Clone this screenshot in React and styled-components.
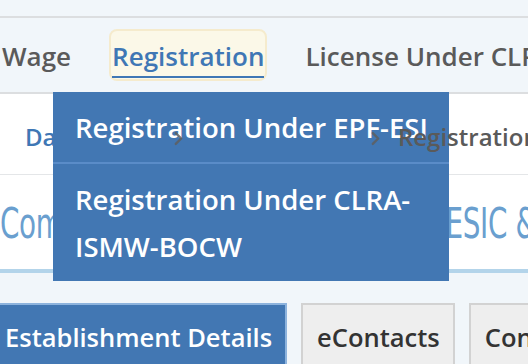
import React from "react";
import styled, { createGlobalStyle } from "styled-components";

const GlobalStyle = createGlobalStyle`
  html, body {
    margin: 0;
    padding: 0;
    background: #f1f6fa;
    font-family: "Open Sans", "Liberation Sans", sans-serif;
  }
`;

const navItems = [
  { label: "Wage" },
  { label: "Registration", active: true },
  { label: "License Under CLRA" },
];

const menuItems = ["Registration Under EPF-ESI", "Registration Under CLRA-ISMW-BOCW"];

const ChevronIcon = () => (
  <ChevronSvg viewBox="0 0 10 16">
    <path d="M2 2 L8 8 L2 14" fill="none" stroke="#5f5f5f" strokeWidth="2.6" strokeLinecap="round" strokeLinejoin="round" />
  </ChevronSvg>
);

function App() {
  return (
    <Page>
      <GlobalStyle />
      <TopStrip />
      <Nav>
        {navItems.map((item, i) => (
          <React.Fragment key={item.label}>
            {i > 0 && <NavSep />}
            <NavItem $active={item.active}>
              <NavText $active={item.active}>{item.label}</NavText>
            </NavItem>
          </React.Fragment>
        ))}
      </Nav>
      <Breadcrumb>
        <Crumb $link>Dashboard</Crumb>
        <ChevronIcon />
        <Crumb $link>Compliances</Crumb>
        <ChevronIcon />
        <Crumb>Registration</Crumb>
      </Breadcrumb>
      <TitleBar>
        <Title>Compliance Registration for EPF-ESIC &amp; Others</Title>
      </TitleBar>
      <Tabs>
        <Tab $active>Establishment Details</Tab>
        <Tab>eContacts</Tab>
        <Tab>Contractors</Tab>
      </Tabs>

      <Dropdown>
        {menuItems.map((m) => (
          <MenuItem key={m}>{m}</MenuItem>
        ))}
      </Dropdown>
    </Page>
  );
}

const Page = styled.div`
  position: relative;
  width: 528px;
  height: 364px;
  overflow: hidden;
`;

const TopStrip = styled.div`
  height: 16px;
`;

const Nav = styled.div`
  display: flex;
  align-items: center;
  gap: 20px;
  height: 74px;
  padding-left: 2px;
  border-top: 2px solid #dcdee0;
  border-bottom: 2px solid #dcdee0;
  white-space: nowrap;
`;

const NavItem = styled.div`
  display: flex;
  align-items: center;
  height: 48px;
  padding: 0 1px;
  border: 2px solid ${(p) => (p.$active ? "#f5ebcd" : "transparent")};
  border-radius: 8px;
  background: ${(p) => (p.$active ? "#fbf8e8" : "transparent")};
  margin: ${(p) => (p.$active ? "0 -2px" : "0 -3px")};
`;

const NavText = styled.span`
  font-size: 26px;
  font-weight: 600;
  line-height: 40px;
  padding-top: 4px;
  color: ${(p) => (p.$active ? "#3f77b5" : "#5a5a5a")};
  border-bottom: 2px solid ${(p) => (p.$active ? "#3f77b5" : "transparent")};
`;

const NavSep = styled.div`
  width: 2px;
  height: 30px;
  background: #c9c9c9;
`;

const Breadcrumb = styled.div`
  display: flex;
  align-items: center;
  height: 81px;
  padding: 4px 0 0 25px;
  box-sizing: border-box;
  background: #fff;
  border-bottom: 1px solid #e4e6e8;
  white-space: nowrap;
`;

/* the current crumb is painted over the open menu, like in the page */
const Crumb = styled.span`
  position: relative;
  z-index: ${(p) => (p.$link ? "auto" : 3)};
  font-size: 24px;
  font-weight: 600;
  color: ${(p) => (p.$link ? "#3f77b5" : "#5a5a5a")};
`;

const ChevronSvg = styled.svg`
  position: relative;
  z-index: 3;
  flex: none;
  width: 9px;
  height: 15px;
  margin: 4px 18px 0 22px;
  opacity: 0.85;
`;

const TitleBar = styled.div`
  display: flex;
  align-items: center;
  height: 94px;
  background: #fff;
  border-bottom: 4px solid #b3d4ea;
  white-space: nowrap;
`;

const Title = styled.h1`
  margin: 2px 0 0;
  font-family: "DejaVu Sans Condensed", "DejaVu Sans", sans-serif;
  font-stretch: condensed;
  font-weight: 400;
  font-size: 43px;
  letter-spacing: -0.5px;
  color: #6a9fcf;
  transform: scaleX(0.72);
  transform-origin: left center;
`;

const Tabs = styled.div`
  display: flex;
  gap: 14px;
  padding-top: 30px;
  white-space: nowrap;
`;

const Tab = styled.div`
  flex: none;
  height: 60px;
  padding: 2px 13px 2px;
  padding-left: ${(p) => (p.$active ? "5px" : "14px")};
  display: flex;
  align-items: center;
  font-size: 25.5px;
  font-weight: 600;
  color: ${(p) => (p.$active ? "#fff" : "#333")};
  background: ${(p) => (p.$active ? "#4277b3" : "#eeeeee")};
  border: 2px solid ${(p) => (p.$active ? "#8db3dd" : "#d2d2d2")};
  border-left: ${(p) => (p.$active ? "none" : undefined)};
  border-bottom: none;
`;

const Dropdown = styled.div`
  position: absolute;
  z-index: 2;
  left: 53px;
  top: 92px;
  width: 396px;
  background: #4277b3;
`;

const MenuItem = styled.div`
  padding: 12px 16px 11px 22px;
  font-size: 27.5px;
  font-weight: 600;
  line-height: 47px;
  color: #fff;
  & + & {
    border-top: 2px solid #5a8cc8;
  }
`;

export default App;
